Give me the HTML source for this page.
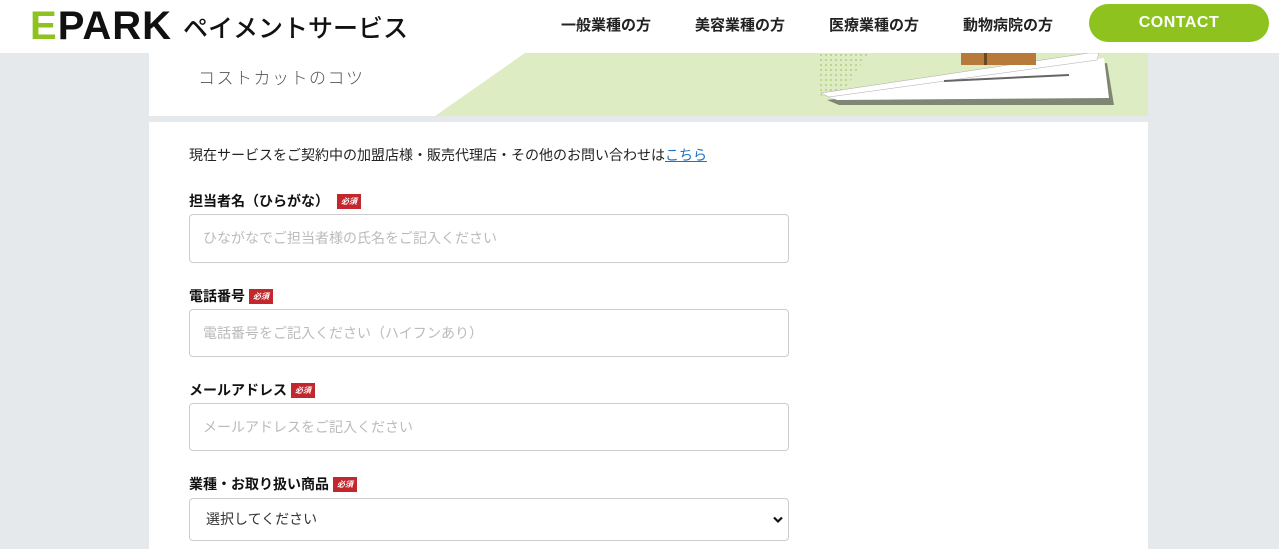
<!DOCTYPE html>
<html><head><meta charset="utf-8"><style>
*{margin:0;padding:0;box-sizing:border-box}
body{width:1279px;height:549px;overflow:hidden;background:#e6e9ec;font-family:"Liberation Sans","Noto Sans CJK JP",sans-serif;position:relative}
.hdr{position:absolute;left:0;top:0;width:1279px;height:53px;background:#fff}
.logo{position:absolute;left:30px;top:4px;font-weight:bold;font-size:40px;letter-spacing:1px;color:#111;font-family:"Liberation Sans",sans-serif}
.logo b{color:#8dc21f}
.logo2{position:absolute;left:183px;top:9px;font-size:25px;color:#111;font-weight:500}
.nav{position:absolute;top:14px;font-size:15px;font-weight:bold;color:#222}
.cta{position:absolute;left:1089px;top:4px;width:180px;height:38px;background:#8dc21f;border-radius:19px;color:#fff;font-weight:bold;font-size:16px;text-align:center;line-height:37px;letter-spacing:.5px}
.panel{position:absolute;left:149px;top:53px;width:999px;height:496px;background:#fff}
.ban{position:absolute;left:0;top:0;width:999px;height:63px;overflow:hidden}
.strip{position:absolute;left:0;top:63px;width:999px;height:6px;background:#e6e9ec}
.t{position:absolute;left:49px;top:11px;font-size:17px;color:#555;letter-spacing:1.5px;font-weight:300}
.lbl{position:absolute;left:40px;font-size:14px;font-weight:bold;color:#111}
.req{display:inline-block;background:#c1272d;color:#fff;font-size:8px;padding:2px 4px;vertical-align:2px;margin-left:8px;font-style:italic}
.in{position:absolute;left:40px;width:600px;border:1px solid #ccc;border-radius:4px;font-size:14px;color:#bbb;padding-left:13px}
</style></head><body>
<div class="hdr">
<div class="logo"><b>E</b>PARK</div>
<div class="logo2">ペイメントサービス</div>
<div class="nav" style="left:561px">一般業種の方</div>
<div class="nav" style="left:695px">美容業種の方</div>
<div class="nav" style="left:829px">医療業種の方</div>
<div class="nav" style="left:963px">動物病院の方</div>
<div class="cta">CONTACT</div>
</div>
<div class="panel">
<div class="ban">
<svg width="999" height="63" style="position:absolute;left:0;top:0">
<defs><pattern id="d" width="5" height="5" patternUnits="userSpaceOnUse"><circle cx="2" cy="2" r="1" fill="#b5cc7a"/></pattern></defs>
<polygon points="286,63 376,0 999,0 999,63" fill="#deecc4"/>
<polygon points="668,0 720,0 690,45 672,45" fill="url(#d)"/>
<polygon points="678,47 958,10 965,52 690,52" fill="#333" opacity=".55"/>
<polygon points="676,42 955,5 960,45 688,47" fill="#fff"/>
<polygon points="672,40 940,0 950,0 948,7 680,44" fill="#fff" stroke="#aaa" stroke-width=".5"/>
<rect x="812" y="0" width="75" height="12" fill="#b87a3a"/>
<rect x="835" y="0" width="3" height="12" fill="#6a4820"/>
<line x1="795" y1="28" x2="920" y2="22" stroke="#666" stroke-width="2"/>
</svg>
<div class="t">コストカットのコツ</div>
</div>
<div class="strip"></div>
<div style="position:absolute;left:40px;top:92px;font-size:14px;color:#222">現在サービスをご契約中の加盟店様・販売代理店・その他のお問い合わせは<span style="color:#1a73c8;text-decoration:underline">こちら</span></div>
<div class="lbl" style="top:138px">担当者名（ひらがな）<span class="req">必須</span></div>
<div class="in" style="top:161px;height:49px;line-height:47px">ひながなでご担当者様の氏名をご記入ください</div>
<div class="lbl" style="top:233px">電話番号<span class="req" style="margin-left:4px">必須</span></div>
<div class="in" style="top:256px;height:48px;line-height:46px">電話番号をご記入ください（ハイフンあり）</div>
<div class="lbl" style="top:327px">メールアドレス<span class="req" style="margin-left:4px">必須</span></div>
<div class="in" style="top:350px;height:48px;line-height:46px">メールアドレスをご記入ください</div>
<div class="lbl" style="top:421px">業種・お取り扱い商品<span class="req" style="margin-left:4px">必須</span></div>
<div class="in" style="top:445px;height:43px;line-height:41px;color:#333;font-size:14px;padding-left:16px">選択してください<svg width="10" height="8" style="position:absolute;right:5px;top:17px"><path d="M1,1.5 L5,5.5 L9,1.5" stroke="#111" stroke-width="2.2" fill="none"/></svg></div>
</div>
</body></html>
